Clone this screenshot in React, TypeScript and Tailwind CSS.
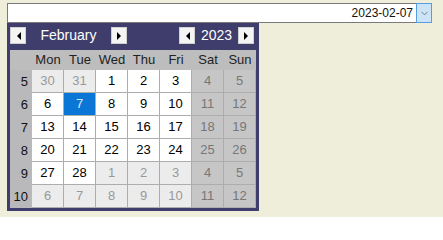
import { ChevronDown } from 'lucide-react'

type Cell = { day: number; other?: boolean }

const weeks: { no: number; days: Cell[] }[] = [
  { no: 5, days: [{ day: 30, other: true }, { day: 31, other: true }, { day: 1 }, { day: 2 }, { day: 3 }, { day: 4 }, { day: 5 }] },
  { no: 6, days: [{ day: 6 }, { day: 7 }, { day: 8 }, { day: 9 }, { day: 10 }, { day: 11 }, { day: 12 }] },
  { no: 7, days: [{ day: 13 }, { day: 14 }, { day: 15 }, { day: 16 }, { day: 17 }, { day: 18 }, { day: 19 }] },
  { no: 8, days: [{ day: 20 }, { day: 21 }, { day: 22 }, { day: 23 }, { day: 24 }, { day: 25 }, { day: 26 }] },
  { no: 9, days: [{ day: 27 }, { day: 28 }, { day: 1, other: true }, { day: 2, other: true }, { day: 3, other: true }, { day: 4, other: true }, { day: 5, other: true }] },
  { no: 10, days: [{ day: 6, other: true }, { day: 7, other: true }, { day: 8, other: true }, { day: 9, other: true }, { day: 10, other: true }, { day: 11, other: true }, { day: 12, other: true }] },
]

const dayNames = ['Mon', 'Tue', 'Wed', 'Thu', 'Fri', 'Sat', 'Sun']

function ArrowButton({ dir }: { dir: 'left' | 'right' }) {
  return (
    <button className="w-[16px] h-[17px] bg-[#f4f4f4] border border-[#d0d0d0] flex items-center justify-center">
      <svg width="5" height="8" viewBox="0 0 5 8">
        {dir === 'left' ? (
          <polygon points="5,0 5,8 1,4" fill="#000" />
        ) : (
          <polygon points="0,0 0,8 4,4" fill="#000" />
        )}
      </svg>
    </button>
  )
}

export default function App() {
  return (
    <div className="w-[443px] h-[217px] bg-[#efeedb] pt-[3px] pl-[7px] overflow-hidden font-['Liberation_Sans',Arial,sans-serif]">
      {/* INPUT */}
      <div className="w-[425px] h-[20px] bg-white border border-[#7a7a7a] flex items-center justify-end">
        <span className="text-[12px] text-[#111] pr-[3px] leading-none">2023-02-07</span>
        <div className="w-[16px] h-[20px] -my-px -mr-px bg-[#cce4f7] border border-[#569de5] flex items-center justify-center">
          <ChevronDown size={11} strokeWidth={1.5} className="text-[#555]" />
        </div>
      </div>

      {/* CALENDAR */}
      <div className="w-[252px] border-[3px] border-[#3e3d6c] bg-[#3e3d6c]">
        {/* HEADER */}
        <div className="h-[24px] flex items-start pt-[1px] pr-[2px] text-white text-[14px]">
          <ArrowButton dir="left" />
          <div className="w-[85px] text-center leading-[17px]">February</div>
          <ArrowButton dir="right" />
          <div className="flex-1" />
          <ArrowButton dir="left" />
          <div className="w-[43px] text-center leading-[17px]">2023</div>
          <ArrowButton dir="right" />
        </div>

        {/* GRID */}
        <div className="grid grid-cols-[22px_repeat(7,32px)] bg-[#bdbdbd] text-[13px]">
          <div className="h-[20px]" />
          {dayNames.map(d => (
            <div key={d} className="h-[20px] flex items-center justify-center text-[#222]">
              {d}
            </div>
          ))}

          {weeks.map(w => (
            <div key={w.no} className="contents">
              <div className="h-[23px] flex items-center justify-end pr-[4px] bg-[#b9b9bc] text-[#111]">
                {w.no}
              </div>
              {w.days.map((c, i) => {
                const weekend = i >= 5
                const selected = w.no === 6 && c.day === 7
                let cls = 'bg-white text-black'
                if (selected) cls = 'bg-[#0a76d6] text-[#dbe9fb]'
                else if (weekend) cls = 'bg-[#c6c6c6] text-[#777]'
                else if (c.other) cls = 'bg-[#ececec] text-[#999]'
                return (
                  <div
                    key={i}
                    className={`h-[23px] flex items-center justify-center border-r border-b border-[#adadad] ${cls}`}
                  >
                    {c.day}
                  </div>
                )
              })}
            </div>
          ))}
        </div>
      </div>
    </div>
  )
}
